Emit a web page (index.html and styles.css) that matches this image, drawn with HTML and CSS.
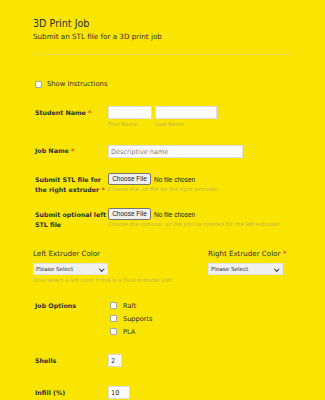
FILE: index.html
```html
<!DOCTYPE html>
<html>
    <head>
        <title>3D Print Job</title>
        <link rel="stylesheet" href="styles.css">
    </head>
    <body>
        <div class="form">
            <div class="header">
                <h1>3D Print Job</h1>
                <p>Submit an STL file for a 3D print job</p>
            </div>

            <label class="toggle"><input type="checkbox" class="box"> Show Instructions</label>

            <div class="line name-line">
                <div class="label">Student Name <span class="req">*</span></div>
                <div class="field">
                    <div class="pair">
                        <div><input type="text" class="first"><div class="sub">First Name</div></div>
                        <div><input type="text" class="last"><div class="sub">Last Name</div></div>
                    </div>
                </div>
            </div>

            <div class="line job-line">
                <div class="label">Job Name <span class="req">*</span></div>
                <div class="field"><input type="text" class="job" placeholder="Descriptive name"></div>
            </div>

            <div class="line file-line">
                <div class="label">Submit STL file for the right extruder <span class="req">*</span></div>
                <div class="field">
                    <div class="file"><span class="btn">Choose File</span> No file chosen</div>
                    <div class="sub hint">Choose the .stl file for the right extruder.</div>
                </div>
            </div>

            <div class="line file-line">
                <div class="label">Submit optional left STL file</div>
                <div class="field">
                    <div class="file"><span class="btn">Choose File</span> No file chosen</div>
                    <div class="sub hint">Choose the optional .stl file you've created for the left extruder.</div>
                </div>
            </div>

            <div class="colors">
                <div class="color">
                    <div class="label">Left Extruder Color</div>
                    <div class="select">Please Select <span class="chev"></span></div>
                    <div class="sub">Only select a left color if this is a Dual extruder job!</div>
                </div>
                <div class="color">
                    <div class="label">Right Extruder Color <span class="req">*</span></div>
                    <div class="select">Please Select <span class="chev"></span></div>
                </div>
            </div>

            <div class="line options-line">
                <div class="label">Job Options</div>
                <div class="field checks">
                    <label><input type="checkbox" class="box"> Raft</label>
                    <label><input type="checkbox" class="box"> Supports</label>
                    <label><input type="checkbox" class="box"> PLA</label>
                </div>
            </div>

            <div class="line num-line">
                <div class="label">Shells</div>
                <div class="field"><input type="text" class="num" value="2"></div>
            </div>

            <div class="line num-line infill">
                <div class="label">Infill (%)</div>
                <div class="field"><input type="text" class="num wide" value="10"></div>
            </div>
        </div>
    </body>
</html>
```

FILE: styles.css
```css
html, body {
    margin: 0;
    background: #f9e500;
    font-family: "DejaVu Sans", Verdana, sans-serif;
    color: #2f2f2f;
}
.form {
    padding: 18px 33px 0 33px;
}
.header h1 {
    font-size: 9.6px;
    font-weight: normal;
    margin: 0;
    line-height: 12px;
}
.header p {
    font-size: 7.2px;
    margin: 2px 0 0;
    line-height: 10px;
}
.header {
    border-bottom: 1px solid #eadb4a;
    padding-bottom: 12px;
    width: 259px;
}
.box {
    -webkit-appearance: none;
    appearance: none;
    width: 7px;
    height: 7px;
    margin: 0;
    background: #fff;
    border: 1px solid #a8a8a8;
    border-radius: 1px;
    box-sizing: border-box;
}
.toggle {
    display: flex;
    align-items: center;
    gap: 5px;
    margin: 25px 0 0 2px;
    font-size: 6.8px;
    line-height: 8px;
}
.line {
    display: flex;
    padding-left: 2px;
}
.label {
    width: 73px;
    font-size: 6.3px;
    font-weight: bold;
    line-height: 10px;
    flex: none;
}
.req { color: #f0302f; }
.field {
    flex: 1;
}
input[type=text] {
    font-family: "DejaVu Sans", Verdana, sans-serif;
    font-size: 6.5px;
    height: 13px;
    box-sizing: border-box;
    border: 1px solid #dcdcdc;
    background: #fff;
    margin: 0;
    padding: 0 2px;
    color: #222;
    display: block;
}
input::placeholder { color: #777; }
.sub {
    font-size: 5.4px;
    color: #c4b652;
    line-height: 7px;
    margin-top: 2px;
    white-space: nowrap;
}
.name-line { margin-top: 18px; }
.name-line .label { padding-top: 2px; }
.pair { display: flex; gap: 3px; }
.first { width: 44px; }
.last { width: 62px; }
.job-line { margin-top: 17px; }
.job-line .label { padding-top: 1px; }
.job { width: 135px; }
.file-line { margin-top: 15px; }
.file-line .label { padding-top: 2px; }
.file-line + .file-line { margin-top: 13px; }
.file {
    font-family: "Liberation Sans", Arial, sans-serif;
    font-size: 6.5px;
    color: #222;
    display: flex;
    align-items: center;
    gap: 3px;
    height: 12px;
}
.btn {
    display: inline-block;
    height: 12px;
    line-height: 10px;
    width: 43px;
    box-sizing: border-box;
    border: 1px solid #767676;
    border-radius: 2px;
    background: #efefef;
    text-align: center;
}
.hint {
    font-style: italic;
    font-size: 5.4px;
    margin-top: 1px;
}
.colors {
    display: grid;
    grid-template-columns: 175px auto;
    margin-top: 19px;
}
.color .label {
    width: auto;
    font-weight: normal;
    font-size: 7.1px;
    margin-bottom: 4px;
}
.select {
    width: 75px;
    height: 12px;
    box-sizing: border-box;
    background: #f0f0f0;
    border: 1px solid #e2e2e2;
    font-size: 5.6px;
    line-height: 10px;
    padding-left: 2px;
    position: relative;
}
.chev {
    position: absolute;
    right: 4px;
    top: 3px;
    width: 2.5px;
    height: 2.5px;
    border-right: 1px solid #333;
    border-bottom: 1px solid #333;
    transform: rotate(45deg);
}
.color .sub { margin-top: 2px; }
.options-line { margin-top: 17px; }
.checks label {
    display: flex;
    align-items: center;
    gap: 6px;
    font-size: 6.6px;
    height: 13px;
    margin-left: 2px;
    margin-top: -2px;
}
.checks label + label { margin-top: 0; }
.num-line { margin-top: 16px; align-items: center; }
.num { width: 14px; }
.num.wide { width: 22px; }
.infill { margin-top: 19px; }
```
